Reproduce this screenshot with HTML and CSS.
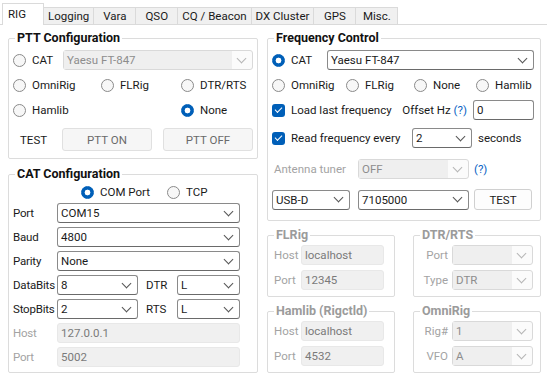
FILE: index.html
```html
<!DOCTYPE html>
<html lang="en">
<head>
    <meta charset="UTF-8">
    <title>RIG</title>
    <link rel="stylesheet" href="styles.css">
</head>
<body>
    <div class="tabs">
        <div class="tab active">RIG</div>
        <div class="tab">Logging</div>
        <div class="tab">Vara</div>
        <div class="tab">QSO</div>
        <div class="tab">CQ / Beacon</div>
        <div class="tab">DX Cluster</div>
        <div class="tab">GPS</div>
        <div class="tab">Misc.</div>
    </div>

    <div class="page">
        <div class="col col-left">
            <fieldset class="group ptt">
                <legend>PTT Configuration</legend>
                <div class="row ptt-r1">
                    <label class="radio"><span class="dot"></span>CAT</label>
                    <div class="combo off ptt-rig"><span class="val">Yaesu FT-847</span></div>
                </div>
                <div class="opts ptt-r2">
                    <label class="radio"><span class="dot"></span>OmniRig</label>
                    <label class="radio"><span class="dot"></span>FLRig</label>
                    <label class="radio"><span class="dot"></span>DTR/RTS</label>
                </div>
                <div class="opts ptt-r3">
                    <label class="radio"><span class="dot"></span>Hamlib</label>
                    <span></span>
                    <label class="radio on"><span class="dot"></span>None</label>
                </div>
                <div class="row ptt-r4">
                    <span class="test-label">TEST</span>
                    <button class="btn dim">PTT ON</button>
                    <button class="btn dim">PTT OFF</button>
                </div>
            </fieldset>

            <fieldset class="group cat">
                <legend>CAT Configuration</legend>
                <div class="row cat-mode">
                    <label class="radio on"><span class="dot"></span>COM Port</label>
                    <label class="radio"><span class="dot"></span>TCP</label>
                </div>
                <div class="form-row">
                    <span class="lbl">Port</span>
                    <div class="combo grow"><span class="val">COM15</span></div>
                </div>
                <div class="form-row">
                    <span class="lbl">Baud</span>
                    <div class="combo grow"><span class="val">4800</span></div>
                </div>
                <div class="form-row">
                    <span class="lbl">Parity</span>
                    <div class="combo grow"><span class="val">None</span></div>
                </div>
                <div class="form-row">
                    <span class="lbl">DataBits</span>
                    <div class="combo bits"><span class="val">8</span></div>
                    <span class="lbl2">DTR</span>
                    <div class="combo grow"><span class="val">L</span></div>
                </div>
                <div class="form-row">
                    <span class="lbl">StopBits</span>
                    <div class="combo bits"><span class="val">2</span></div>
                    <span class="lbl2">RTS</span>
                    <div class="combo grow"><span class="val">L</span></div>
                </div>
                <div class="form-row">
                    <span class="lbl muted">Host</span>
                    <div class="field off grow">127.0.0.1</div>
                </div>
                <div class="form-row">
                    <span class="lbl muted">Port</span>
                    <div class="field off grow">5002</div>
                </div>
            </fieldset>
        </div>

        <div class="col col-right">
            <fieldset class="group freq">
                <legend>Frequency Control</legend>
                <div class="row fr-r1">
                    <label class="radio on"><span class="dot"></span>CAT</label>
                    <div class="combo fr-rig"><span class="val">Yaesu FT-847</span></div>
                </div>
                <div class="opts fr-r2">
                    <label class="radio"><span class="dot"></span>OmniRig</label>
                    <label class="radio"><span class="dot"></span>FLRig</label>
                    <label class="radio"><span class="dot"></span>None</label>
                    <label class="radio"><span class="dot"></span>Hamlib</label>
                </div>
                <div class="row fr-r3">
                    <label class="checkbox"><span class="box"></span>Load last frequency</label>
                    <span class="offset-lbl">Offset Hz <span class="help">(?)</span></span>
                    <div class="field offset">0</div>
                </div>
                <div class="row fr-r4">
                    <label class="checkbox"><span class="box"></span>Read frequency every</label>
                    <div class="combo secs"><span class="val">2</span></div>
                    <span class="unit">seconds</span>
                </div>
                <div class="row fr-r5">
                    <span class="tuner-lbl">Antenna tuner</span>
                    <div class="combo off tuner"><span class="val">OFF</span></div>
                    <span class="help">(?)</span>
                </div>
                <div class="row fr-r6">
                    <div class="combo mode"><span class="val">USB-D</span></div>
                    <div class="combo qrg"><span class="val">7105000</span></div>
                    <button class="btn test">TEST</button>
                </div>
            </fieldset>

            <div class="pair">
                <fieldset class="group small dis">
                    <legend>FLRig</legend>
                    <div class="mini-row">
                        <span class="mlbl">Host</span>
                        <div class="field off host">localhost</div>
                    </div>
                    <div class="mini-row">
                        <span class="mlbl">Port</span>
                        <div class="field off host">12345</div>
                    </div>
                </fieldset>
                <fieldset class="group small dis">
                    <legend>DTR/RTS</legend>
                    <div class="mini-row">
                        <span class="mlbl right">Port</span>
                        <div class="combo off pick"><span class="val"></span></div>
                    </div>
                    <div class="mini-row">
                        <span class="mlbl right">Type</span>
                        <div class="combo off pick"><span class="val">DTR</span></div>
                    </div>
                </fieldset>
            </div>

            <div class="pair">
                <fieldset class="group small dis">
                    <legend>Hamlib (Rigctld)</legend>
                    <div class="mini-row">
                        <span class="mlbl">Host</span>
                        <div class="field off host">localhost</div>
                    </div>
                    <div class="mini-row">
                        <span class="mlbl">Port</span>
                        <div class="field off host">4532</div>
                    </div>
                </fieldset>
                <fieldset class="group small dis">
                    <legend>OmniRig</legend>
                    <div class="mini-row">
                        <span class="mlbl right">Rig#</span>
                        <div class="combo off pick"><span class="val">1</span></div>
                    </div>
                    <div class="mini-row">
                        <span class="mlbl right">VFO</span>
                        <div class="combo off pick"><span class="val">A</span></div>
                    </div>
                </fieldset>
            </div>
        </div>
    </div>
</body>
</html>
```

FILE: styles.css
```css
* {
    box-sizing: border-box;
}
body {
    margin: 0;
    background: #fff;
    color: #1a1a1a;
    font-family: Roboto, "Liberation Sans", sans-serif;
    font-size: 11.5px;
}

/* tab strip */
.tabs {
    display: flex;
    align-items: flex-end;
    height: 25px;
    padding-left: 2px;
    border-bottom: 1px solid #dadada;
}
.tab {
    min-width: 42px;
    height: 17px;
    line-height: 16px;
    padding: 0 4px;
    text-align: center;
    background: #f0f0f0;
    border-top: 1px solid #dadada;
    border-right: 1px solid #dadada;
}
.tab.active {
    width: 42px;
    height: 22px;
    line-height: 20px;
    margin-bottom: -1px;
    padding: 0 0 0 5px;
    text-align: left;
    background: #fff;
    border-left: 1px solid #dadada;
}

.page {
    display: flex;
    gap: 9px;
    padding: 5px 0 0 8px;
}
.col-left {
    width: 250px;
}
.col-right {
    width: 274px;
}

/* group boxes */
.group {
    margin: 0;
    padding: 0 4px;
    min-width: 0;
    border: 1px solid #dcdcdc;
    border-radius: 2px;
}
.group legend {
    margin-left: 2px;
    padding: 0 2px;
    font-size: 12.5px;
    font-weight: bold;
    line-height: 16px;
    color: #111;
}
.group.dis legend {
    color: #9b9b9b;
}

.row {
    display: flex;
    align-items: center;
}

/* radios and checkboxes */
.radio,
.checkbox {
    display: flex;
    align-items: center;
    gap: 6px;
    height: 18px;
    white-space: nowrap;
}
.dot {
    width: 13px;
    height: 13px;
    border-radius: 50%;
    border: 1px solid #8a8a8a;
    background: #f7f7f7;
}
.radio.on .dot {
    border-color: #005fb8;
    background: radial-gradient(circle, #fff 0 2.6px, #005fb8 3.2px);
}
.box {
    display: flex;
    align-items: center;
    justify-content: center;
    width: 13px;
    height: 13px;
    border-radius: 3px;
    background: #005fb8;
}
.box::after {
    content: "";
    width: 6px;
    height: 3px;
    margin-top: -2px;
    border-left: 1.3px solid #fff;
    border-bottom: 1.3px solid #fff;
    transform: rotate(-45deg);
}

/* combo boxes and inputs */
.combo {
    display: flex;
    align-items: center;
    height: 20px;
    padding-left: 3px;
    background: #fff;
    border: 1px solid #8a8a8a;
    border-bottom-color: #6a6a6a;
    border-radius: 3px;
    white-space: nowrap;
}
.combo .val {
    flex: 1;
    align-self: stretch;
    display: flex;
    align-items: center;
}
.combo::after {
    content: "";
    width: 6px;
    height: 6px;
    margin: -4px 7px 0 6px;
    border-right: 1px solid #555;
    border-bottom: 1px solid #555;
    transform: rotate(45deg);
}
.combo.off {
    padding-left: 0;
    background: #fbfbfb;
    border-color: #d9d9d9;
    color: #8d8d8d;
}
.combo.off .val {
    padding-left: 3px;
    background: #efefef;
}
.combo.off::after {
    border-color: #b5b5b5;
}

.field {
    display: flex;
    align-items: center;
    height: 20px;
    padding-left: 3px;
    background: #fff;
    border: 1px solid #8a8a8a;
    border-bottom-color: #6a6a6a;
    border-radius: 3px;
}
.field.off {
    background: #f0f0f0;
    border-color: #e8e8e8;
    color: #7a7a7a;
}

.btn {
    height: 23px;
    padding: 0;
    font: inherit;
    background: #fdfdfd;
    border: 1px solid #d0d0d0;
    border-radius: 3px;
    color: #1a1a1a;
}
.btn.dim {
    width: 90px;
    background: #f6f6f6;
    border-color: #e0e0e0;
    color: #6a6a6a;
}

.help {
    color: #0a62c4;
}
.muted {
    color: #a3a3a3;
}

/* PTT box */
.ptt {
    padding-bottom: 7px;
}
.ptt-r1 {
    margin-top: 4px;
    height: 20px;
}
.ptt-rig {
    width: 190px;
    margin-left: auto;
}
.opts {
    display: grid;
    grid-template-columns: 88px 80px 1fr;
}
.ptt-r2 {
    margin-top: 6px;
}
.ptt-r3 {
    margin-top: 7px;
}
.ptt-r4 {
    margin-top: 9px;
    gap: 11px;
}
.test-label {
    width: 38px;
    padding-left: 7px;
}

/* CAT box */
.cat {
    margin-top: 7px;
    padding-bottom: 5px;
}
.cat-mode {
    margin-top: 1px;
    padding-left: 68px;
    gap: 17px;
}
.form-row {
    display: flex;
    align-items: center;
    width: 227px;
    height: 20px;
    margin-top: 4px;
}
.form-row:nth-of-type(2) {
    margin-top: 2px;
}
.lbl {
    width: 44px;
    white-space: nowrap;
    letter-spacing: -0.2px;
}
.lbl2 {
    width: 39px;
    padding-left: 8px;
}
.grow {
    flex: 1;
}
.bits {
    width: 81px;
}

/* Frequency box */
.freq {
    padding-bottom: 10px;
}
.fr-r1 {
    margin-top: 4px;
    height: 20px;
}
.fr-rig {
    width: 207px;
    margin-left: auto;
    margin-right: 2px;
}
.fr-r2 {
    margin-top: 6px;
    grid-template-columns: 74px 68px 62px 1fr;
}
.fr-r3 {
    margin-top: 6px;
}
.offset-lbl {
    margin-left: auto;
    white-space: nowrap;
}
.offset {
    width: 61px;
    margin: 0 2px 0 6px;
}
.fr-r4 {
    margin-top: 8px;
}
.secs {
    width: 60px;
    margin-left: auto;
}
.unit {
    width: 64px;
    padding-left: 6px;
}
.fr-r5 {
    margin-top: 11px;
}
.tuner-lbl {
    width: 86px;
    padding-left: 2px;
    color: #a3a3a3;
}
.tuner {
    width: 111px;
}
.fr-r5 .help {
    margin-left: 5px;
}
.fr-r6 {
    margin-top: 10px;
    gap: 8px;
}
.mode {
    width: 78px;
}
.qrg {
    width: 111px;
}
.btn.test {
    width: 58px;
    height: 21px;
    margin-left: -3px;
}

/* small boxes */
.pair {
    display: flex;
    gap: 18px;
    margin-top: 6px;
}
.small {
    width: 128px;
    padding-bottom: 6px;
}
.mini-row {
    display: flex;
    align-items: center;
    height: 20px;
    margin-top: 5px;
}
.mini-row:first-of-type {
    margin-top: 2px;
}
.mlbl {
    width: 29px;
    padding-left: 2px;
    color: #a3a3a3;
}
.mlbl.right {
    width: 34px;
    padding-right: 4px;
    text-align: right;
}
.host {
    width: 83px;
    color: #444;
}
.pick {
    width: 81px;
    color: #333;
}
```
